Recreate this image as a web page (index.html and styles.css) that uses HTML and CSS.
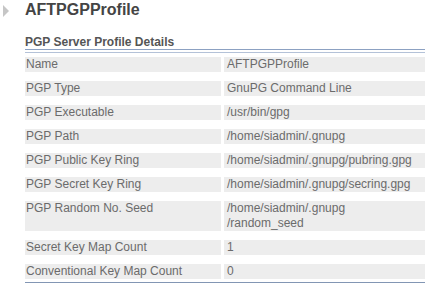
FILE: index.html
```html
<!DOCTYPE html>
<html lang="en">
<head>
    <meta charset="UTF-8">
    <title>AFTPGPProfile</title>
    <link rel="stylesheet" href="styles.css">
</head>
<body>

    <header class="page-title">
        <span class="toggle"></span>
        <h1>AFTPGPProfile</h1>
    </header>

    <section class="profile">
        <h2>PGP Server Profile Details</h2>

        <div class="details">
            <div class="label">Name</div>
            <div class="value">AFTPGPProfile</div>

            <div class="label">PGP Type</div>
            <div class="value">GnuPG Command Line</div>

            <div class="label">PGP Executable</div>
            <div class="value">/usr/bin/gpg</div>

            <div class="label">PGP Path</div>
            <div class="value">/home/siadmin/.gnupg</div>

            <div class="label">PGP Public Key Ring</div>
            <div class="value">/home/siadmin/.gnupg/pubring.gpg</div>

            <div class="label">PGP Secret Key Ring</div>
            <div class="value">/home/siadmin/.gnupg/secring.gpg</div>

            <div class="label">PGP Random No. Seed</div>
            <div class="value">/home/siadmin/.gnupg<br>/random_seed</div>

            <div class="label">Secret Key Map Count</div>
            <div class="value">1</div>

            <div class="label">Conventional Key Map Count</div>
            <div class="value">0</div>
        </div>
    </section>

</body>
</html>
```

FILE: styles.css
```css
body {
    font-family: "Liberation Sans", Arial, sans-serif;
    margin: 0;
    padding: 0;
    background-color: #fff;
}

.page-title {
    position: relative;
    padding-left: 25px;
}

/* collapsed-section arrow */
.toggle {
    position: absolute;
    left: 3px;
    top: 5px;
    width: 0;
    height: 0;
    border-top: 6px solid transparent;
    border-bottom: 6px solid transparent;
    border-left: 6px solid #c6c6c6;
}

.page-title h1 {
    margin: 0;
    font-size: 16px;
    line-height: 20px;
    color: #444;
}

.profile {
    width: 400px;
    margin: 15px 0 0 25px;
}

.profile h2 {
    margin: 0 0 2px;
    font-size: 12px;
    line-height: 14px;
    color: #555;
    border-bottom: 1px solid #8ca1c2;
}

.details {
    display: grid;
    grid-template-columns: 196px 201px;
    column-gap: 3px;
    row-gap: 9px;
    padding: 4px 0 3px;
    border-top: 1px solid #b4c2d8;
    border-bottom: 1px solid #8296b4;
    font-size: 12px;
    line-height: 15px;
    color: #6b6b6b;
}

.details .label,
.details .value {
    background-color: #ededed;
}

.details .label {
    padding-left: 1px;
}

.details .value {
    padding-left: 3px;
}
```
